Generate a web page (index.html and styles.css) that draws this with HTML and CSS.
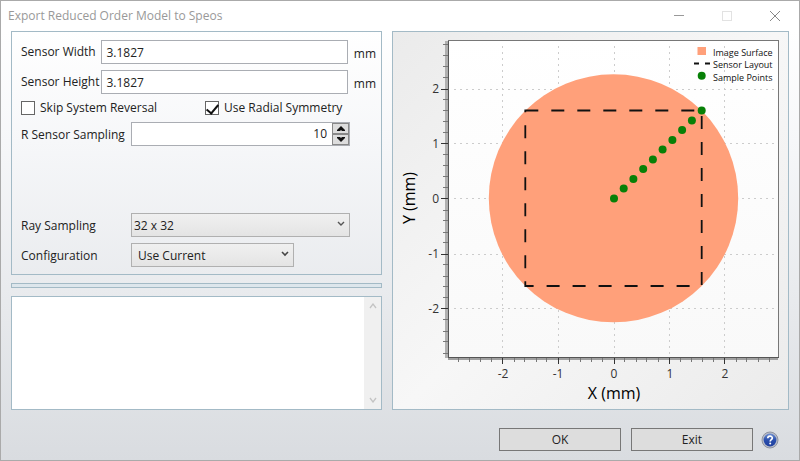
FILE: index.html
```
<!DOCTYPE html>
<html lang="en">
<head>
    <meta charset="UTF-8">
    <meta name="viewport" content="width=device-width, initial-scale=1.0">
    <title>Export Reduced Order Model to Speos</title>
    <link rel="stylesheet" href="styles.css">
</head>
<body>
    <div class="window">
        <header class="titlebar">
            <h1>Export Reduced Order Model to Speos</h1>
            <div class="window-buttons">
                <button type="button" aria-label="Minimize">
                    <svg width="12" height="12" viewBox="0 0 12 12"><path d="M1 5.5H11" stroke="#999"/></svg>
                </button>
                <button type="button" aria-label="Maximize" disabled>
                    <svg width="12" height="12" viewBox="0 0 12 12"><rect x="1.5" y="1.5" width="9" height="9" fill="none" stroke="#e2e2e2"/></svg>
                </button>
                <button type="button" aria-label="Close">
                    <svg width="12" height="12" viewBox="0 0 12 12"><path d="M1 1L11 11M11 1L1 11" stroke="#888" fill="none"/></svg>
                </button>
            </div>
        </header>

        <main class="content">
            <div class="left">
                <form class="panel settings">
                    <div class="row">
                        <label class="size-label" for="sensorWidth">Sensor Width</label>
                        <input class="field" type="text" id="sensorWidth" value="3.1827">
                        <span class="unit">mm</span>
                    </div>
                    <div class="row">
                        <label class="size-label" for="sensorHeight">Sensor Height</label>
                        <input class="field" type="text" id="sensorHeight" value="3.1827">
                        <span class="unit">mm</span>
                    </div>
                    <div class="row checks">
                        <label><input type="checkbox" id="skipReversal">Skip System Reversal</label>
                        <label><input type="checkbox" id="radialSymmetry" checked>Use Radial Symmetry</label>
                    </div>
                    <div class="row">
                        <label class="option-label" for="rSampling">R Sensor Sampling</label>
                        <div class="spinner">
                            <input type="text" inputmode="numeric" id="rSampling" value="10">
                            <div class="spinner-buttons">
                                <button type="button" aria-label="Increase">
                                    <svg width="8" height="5" viewBox="0 0 8 5"><path d="M0 4L4 0L8 4V5H5L4 4L3 5H0Z" fill="#111"/></svg>
                                </button>
                                <button type="button" aria-label="Decrease">
                                    <svg width="8" height="5" viewBox="0 0 8 5"><path d="M0 1L4 5L8 1V0H5L4 1L3 0H0Z" fill="#111"/></svg>
                                </button>
                            </div>
                        </div>
                    </div>
                    <div class="row ray-row">
                        <label class="option-label" for="raySampling">Ray Sampling</label>
                        <div class="dropdown wide">
                            <select id="raySampling"><option>32 x 32</option></select>
                            <svg width="8" height="6" viewBox="0 0 8 6"><path d="M1 1L4 4L7 1" fill="none" stroke="#555" stroke-width="1.4"/></svg>
                        </div>
                    </div>
                    <div class="row">
                        <label class="option-label" for="configuration">Configuration</label>
                        <div class="dropdown narrow">
                            <select id="configuration"><option>Use Current</option></select>
                            <svg width="8" height="6" viewBox="0 0 8 6"><path d="M1 1L4 4L7 1" fill="none" stroke="#444" stroke-width="1.6"/></svg>
                        </div>
                    </div>
                </form>

                <div class="progress"></div>

                <div class="panel log">
                    <textarea aria-label="Messages" readonly></textarea>
                    <div class="scrollbar">
                        <svg width="8" height="6" viewBox="0 0 8 6"><path d="M1 5L4 1L7 5" fill="none" stroke="#c4c4c4" stroke-width="1.3"/></svg>
                        <svg width="8" height="6" viewBox="0 0 8 6"><path d="M1 1L4 5L7 1" fill="none" stroke="#c4c4c4" stroke-width="1.3"/></svg>
                    </div>
                </div>
            </div>

            <div class="panel chart">
                <svg viewBox="393 32 395 377" role="img" aria-label="Sensor layout plot">
                    <defs>
                        <linearGradient id="plotFill" x1="0" y1="0" x2="0" y2="1">
                            <stop offset="0" stop-color="#fff"/>
                            <stop offset="1" stop-color="#f9f9f9"/>
                        </linearGradient>
                    </defs>
                    <rect x="448.5" y="40.5" width="330" height="317" fill="url(#plotFill)" stroke="#777"/>

                    <!-- grid -->
                    <path class="grid" d="M502.5 46V357M558.5 46V357M614.5 46V357M669.5 46V357M724.5 46V357"/>
                    <path class="grid" d="M454 89.5H778M454 143.5H778M454 198.5H778M454 254.5H778M454 308.5H778"/>

                    <!-- axes -->
                    <path d="M446.5 41V358" stroke="#b0b0b0" stroke-width="3"/>
                    <path d="M448 359H778" stroke="#a0a0a0" stroke-width="2"/>
                    <path d="M448.5 41V358M448 357.5H779" stroke="#555"/>
                    <path class="minor" d="M443 44.5H448M443 55.5H448M443 66.5H448M443 77.5H448M443 99.5H448M443 110.5H448M443 121.5H448M443 132.5H448M443 154.5H448M443 165.5H448M443 176.5H448M443 187.5H448M443 210.5H448M443 220.5H448M443 232.5H448M443 242.5H448M443 264.5H448M443 276.5H448M443 286.5H448M443 297.5H448M443 319.5H448M443 331.5H448M443 341.5H448M443 353.5H448"/>
                    <path class="minor" d="M458.5 358V362M469.5 358V362M480.5 358V362M491.5 358V362M514.5 358V362M524.5 358V362M536.5 358V362M546.5 358V362M569.5 358V362M580.5 358V362M591.5 358V362M602.5 358V362M624.5 358V362M636.5 358V362M646.5 358V362M658.5 358V362M680.5 358V362M691.5 358V362M702.5 358V362M713.5 358V362M736.5 358V362M746.5 358V362M758.5 358V362M769.5 358V362"/>
                    <path class="major" d="M441 89.5H448M441 143.5H448M441 198.5H448M441 254.5H448M441 308.5H448M502.5 358V364M558.5 358V364M614.5 358V364M669.5 358V364M724.5 358V364"/>

                    <g class="tick-label" text-anchor="end">
                        <text x="439" y="93">2</text>
                        <text x="439" y="148">1</text>
                        <text x="439" y="203">0</text>
                        <text x="439" y="258">-1</text>
                        <text x="439" y="313">-2</text>
                    </g>
                    <g class="tick-label" text-anchor="middle">
                        <text x="503" y="378">-2</text>
                        <text x="558" y="378">-1</text>
                        <text x="614" y="378">0</text>
                        <text x="670" y="378">1</text>
                        <text x="725" y="378">2</text>
                    </g>
                    <text class="axis-title" x="614" y="399">X (mm)</text>
                    <text class="axis-title" transform="translate(415 198) rotate(-90)">Y (mm)</text>

                    <!-- image surface, sensor outline, sample points -->
                    <ellipse cx="613.5" cy="198.3" rx="124.7" ry="124" fill="#ffa07a"/>
                    <path d="M525.3 110.5H701.7V286H525.3Z" fill="none" stroke="#111" stroke-width="1.8" stroke-dasharray="13 13"/>
                    <g fill="#078007">
                        <circle cx="614" cy="198.4" r="4"/>
                        <circle cx="623.7" cy="188.6" r="4"/>
                        <circle cx="633.4" cy="178.9" r="4"/>
                        <circle cx="643.2" cy="169.1" r="4"/>
                        <circle cx="652.9" cy="159.4" r="4"/>
                        <circle cx="662.6" cy="149.6" r="4"/>
                        <circle cx="672.4" cy="139.9" r="4"/>
                        <circle cx="682.1" cy="130.1" r="4"/>
                        <circle cx="691.9" cy="120.4" r="4"/>
                        <circle cx="701.7" cy="110.6" r="4"/>
                    </g>

                    <!-- legend -->
                    <rect x="697.5" y="47" width="8.5" height="8" fill="#ffa07a"/>
                    <path d="M694 63.5H699M705 63.5H710" stroke="#111" stroke-width="1.8"/>
                    <circle cx="701.7" cy="75.8" r="4" fill="#078007"/>
                    <g class="legend">
                        <text x="713" y="56">Image Surface</text>
                        <text x="713" y="68">Sensor Layout</text>
                        <text x="713" y="81">Sample Points</text>
                    </g>
                </svg>
            </div>
        </main>

        <footer class="actions">
            <button type="button" class="btn">OK</button>
            <button type="button" class="btn">Exit</button>
            <button type="button" class="help" aria-label="Help">
                <svg width="18" height="18" viewBox="0 0 18 18">
                    <defs>
                        <linearGradient id="helpFill" x1="0" y1="0" x2="0" y2="1">
                            <stop offset="0" stop-color="#6f8fd0"/>
                            <stop offset=".5" stop-color="#2a4fae"/>
                            <stop offset="1" stop-color="#1f3f9e"/>
                        </linearGradient>
                    </defs>
                    <circle cx="9" cy="9" r="8" fill="#b9bdc8" stroke="#8f94a3"/>
                    <circle cx="9" cy="9" r="6.4" fill="url(#helpFill)"/>
                    <path d="M6.8 7.2C6.8 4.6 11.3 4.5 11.3 7C11.3 8.6 9.2 8.6 9.2 10.4" fill="none" stroke="#fff" stroke-width="1.7"/>
                    <circle cx="9.2" cy="12.5" r="1" fill="#fff"/>
                </svg>
            </button>
        </footer>
    </div>
</body>
</html>
```
FILE: styles.css
```
* {
    box-sizing: border-box;
}
body {
    margin: 0;
    font-family: "Open Sans", "Noto Sans", sans-serif;
    font-size: 12px;
    line-height: 16px;
    color: #222;
}
button, input, select, textarea {
    font: inherit;
    color: inherit;
    margin: 0;
    padding: 0;
}
svg {
    display: block;
}
.window {
    min-height: 100vh;
    display: flex;
    flex-direction: column;
    border: 1px solid #aaa;
    background: linear-gradient(#fff 30px, #f6f7f9 140px, #e8eaed 300px, #d9dce0);
}
.titlebar {
    display: flex;
    justify-content: space-between;
    align-items: center;
    height: 30px;
    padding: 0 18px 0 7px;
    background: #fff;
}
.titlebar h1 {
    margin: 0;
    font-size: 12px;
    font-weight: normal;
    color: #999;
}
.window-buttons {
    display: flex;
    gap: 36px;
}
.window-buttons button, .help {
    border: none;
    background: none;
}
.content {
    flex: 1;
    display: grid;
    grid-template-columns: 371px 1fr;
    gap: 10px;
    padding: 0 10px;
}
.left {
    display: flex;
    flex-direction: column;
    gap: 8px;
}
.panel {
    border: 1px solid #a3bac6;
}
.settings {
    display: flex;
    flex-direction: column;
    gap: 6px;
    padding: 8px 5px 7px 9px;
}
.row {
    display: flex;
    align-items: center;
}
.size-label {
    width: 81px;
}
.option-label {
    width: 110px;
    padding-top: 2px;
}
.field {
    width: 248px;
    height: 24px;
    padding: 0 4px;
    border: 1px solid #aaadb3;
    background: #fff;
}
.unit {
    margin-left: 6px;
    padding-top: 4px;
}
.checks label {
    display: flex;
    align-items: center;
    gap: 5px;
    width: 184px;
    height: 16px;
    white-space: nowrap;
}
.checks label:last-child {
    width: auto;
}
.checks input {
    appearance: none;
    width: 14px;
    height: 14px;
    border: 1px solid #666;
    background: #fff;
}
.checks input:checked {
    display: flex;
    justify-content: center;
    align-items: flex-start;
}
.checks input:checked::after {
    content: "";
    width: 5px;
    height: 10px;
    border: solid #111;
    border-width: 0 2px 2px 0;
    transform: rotate(40deg);
}
.spinner {
    display: flex;
    width: 219px;
    height: 24px;
    border: 1px solid #aaadb3;
    background: #fff;
}
.spinner input {
    flex: 1;
    min-width: 0;
    padding-right: 5px;
    border: none;
    background: none;
    text-align: right;
}
.spinner-buttons {
    display: flex;
    flex-direction: column;
    width: 17px;
}
.spinner-buttons button {
    flex: 1;
    display: grid;
    place-items: center;
    border: 1px solid #888;
    background: #ddd;
}
.ray-row {
    margin-top: 61px;
}
.dropdown {
    position: relative;
    height: 24px;
}
.wide {
    width: 219px;
}
.narrow {
    width: 163px;
}
.dropdown select {
    appearance: none;
    width: 100%;
    height: 100%;
    padding: 1px 20px 0 2px;
    border: 1px solid #b0b0b0;
    border-radius: 0;
    background: linear-gradient(#f0f0f0, #e4e4e4);
}
.narrow select {
    padding-left: 6px;
}
.dropdown svg {
    position: absolute;
    right: 5px;
    top: 8px;
    pointer-events: none;
}
.progress {
    height: 5px;
    border: 1px solid #a3bac6;
    background: #dde6ec;
}
.log {
    flex: 1;
    display: flex;
    background: #fff;
}
.log textarea {
    flex: 1;
    border: none;
    resize: none;
    outline: none;
}
.scrollbar {
    display: flex;
    flex-direction: column;
    justify-content: space-between;
    align-items: center;
    width: 17px;
    padding: 6px 0;
    background: #f0f0f0;
}
.chart {
    background: linear-gradient(135deg, #ebebeb, #f7f7f7 50%, #ebebeb);
}
.chart svg {
    width: 100%;
    height: auto;
}
.grid {
    fill: none;
    stroke: #ccc;
    stroke-dasharray: 2 4;
}
.minor {
    stroke: #777;
}
.major {
    stroke: #333;
}
.tick-label {
    font-size: 12px;
    fill: #333;
}
.axis-title {
    font-size: 16px;
    font-weight: 500;
    fill: #000;
    text-anchor: middle;
}
.legend {
    font-size: 9px;
    fill: #111;
}
.actions {
    display: flex;
    justify-content: flex-end;
    align-items: center;
    gap: 10px;
    padding: 18px 20px 9px;
}
.btn {
    width: 122px;
    height: 23px;
    border: 1px solid #777;
    background: #ddd;
}
.help {
    margin-left: -2px;
}
```
